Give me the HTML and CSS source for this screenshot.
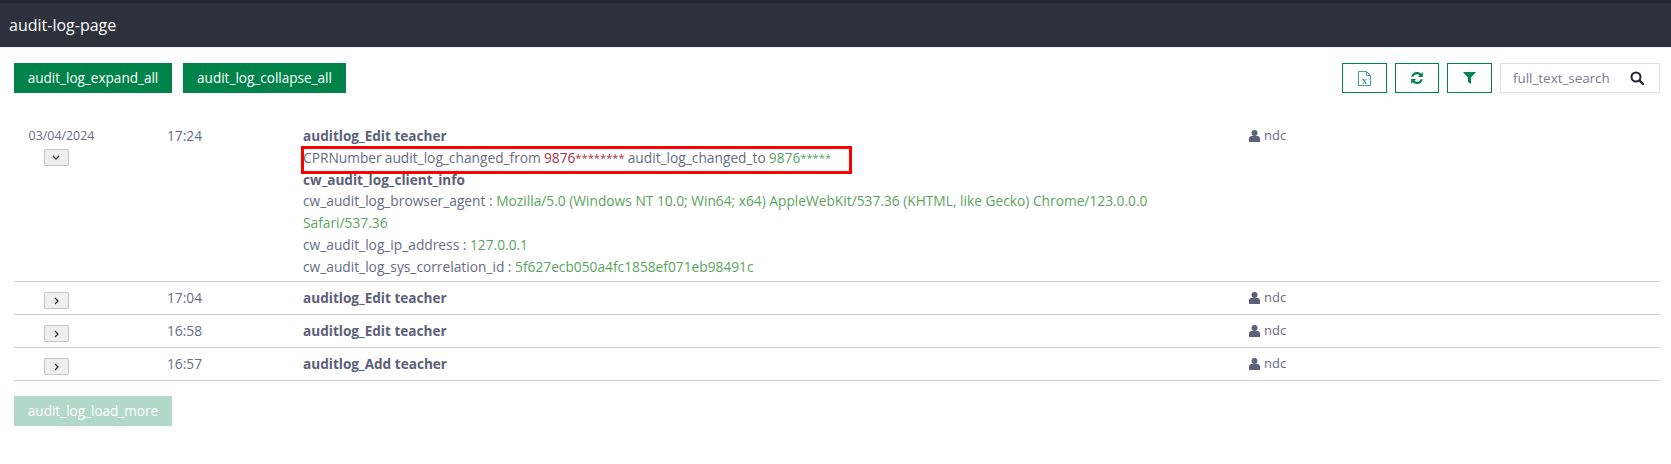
FILE: index.html
```html
<!DOCTYPE html>
<html lang="en">
<head>
<meta charset="utf-8">
<title>audit-log-page</title>
<link rel="stylesheet" href="styles.css">
</head>
<body>
<header class="topbar"><h1 class="page-title">audit-log-page</h1></header>
<main class="content">
  <div class="toolbar">
    <div class="btn-group">
      <button class="btn btn-solid">audit_log_expand_all</button>
      <button class="btn btn-solid btn-wide">audit_log_collapse_all</button>
    </div>
    <div class="tools">
      <button class="btn-icon" aria-label="export">
        <svg width="13" height="15" viewBox="0 0 13 15"><path d="M.5.500h8l4 4v10H.5z" fill="none" stroke="#4a9f95"/><path d="M8.500.500v4h4" fill="none" stroke="#4a9f95"/><text x="6.500" y="12.500" class="xls">x</text></svg>
      </button>
      <button class="btn-icon btn-icon-narrow" aria-label="refresh">
        <svg width="14" height="14" viewBox="0 0 14 14"><path d="M1.200 5.800C1.800 2.900 4.200 1 7 1c1.700 0 3.100.6 4.200 1.700L12.800 1v5H7.900l1.700-1.700C8.900 3.600 8 3.200 7 3.200c-1.700 0-3.100 1-3.600 2.600zM12.800 8.200C12.200 11.100 9.800 13 7 13c-1.700 0-3.100-.6-4.200-1.700L1.200 13V8h4.900l-1.700 1.700c.7.700 1.600 1.100 2.600 1.100 1.700 0 3.100-1 3.600-2.600z" fill="#00834a"/></svg>
      </button>
      <button class="btn-icon" aria-label="filter">
        <svg width="13" height="12" viewBox="0 0 13 12"><path d="M0 0h13L8 5.500V12L5 10V5.500z" fill="#00834a"/></svg>
      </button>
      <label class="search">
        <span class="search-text">full_text_search</span>
        <svg width="14" height="14" viewBox="0 0 14 14"><circle cx="6" cy="6" r="4.500" fill="none" stroke="#1f2533" stroke-width="2"/><path d="M9.500 9.500l3.500 3.500" stroke="#1f2533" stroke-width="2.400" stroke-linecap="round"/></svg>
      </label>
    </div>
  </div>

  <section class="log">
    <article class="row row-open">
      <div class="col-date">
        <span class="date">03/04/2024</span>
        <button class="toggle" aria-label="collapse"><svg width="8" height="5" viewBox="0 0 8 5"><path d="M1 1l3 3 3-3" fill="none" stroke="#333" stroke-width="1.300"/></svg></button>
      </div>
      <div class="col-time">17:24</div>
      <div class="col-main">
        <div class="title">auditlog_Edit teacher</div>
        <div class="line change">CPRNumber audit_log_changed_from <span class="old">9876<span class="mask">********</span></span> audit_log_changed_to <span class="new">9876<span class="mask">*****</span></span><span class="highlight"></span></div>
        <div class="title">cw_audit_log_client_info</div>
        <div class="line">cw_audit_log_browser_agent : <span class="new">Mozilla/5.0 (Windows NT 10.0; Win64; x64) AppleWebKit/537.36 (KHTML, like Gecko) Chrome/123.0.0.0 Safari/537.36</span></div>
        <div class="line">cw_audit_log_ip_address : <span class="new">127.0.0.1</span></div>
        <div class="line">cw_audit_log_sys_correlation_id : <span class="new">5f627ecb050a4fc1858ef071eb98491c</span></div>
      </div>
      <div class="col-user"><svg class="user-icon" width="11" height="12" viewBox="0 0 11 12"><circle cx="5.500" cy="3" r="3" fill="#5c6078"/><path d="M0 12V8.500C0 7 1.200 6 2.500 6h6C9.800 6 11 7 11 8.500V12z" fill="#5c6078"/></svg>ndc</div>
    </article>
    <article class="row">
      <div class="col-date"><button class="toggle" aria-label="expand"><svg width="5" height="8" viewBox="0 0 5 8"><path d="M1 1l3 3-3 3" fill="none" stroke="#333" stroke-width="1.300"/></svg></button></div>
      <div class="col-time">17:04</div>
      <div class="col-main"><div class="title">auditlog_Edit teacher</div></div>
      <div class="col-user"><svg class="user-icon" width="11" height="12" viewBox="0 0 11 12"><circle cx="5.500" cy="3" r="3" fill="#5c6078"/><path d="M0 12V8.500C0 7 1.200 6 2.500 6h6C9.800 6 11 7 11 8.500V12z" fill="#5c6078"/></svg>ndc</div>
    </article>
    <article class="row">
      <div class="col-date"><button class="toggle" aria-label="expand"><svg width="5" height="8" viewBox="0 0 5 8"><path d="M1 1l3 3-3 3" fill="none" stroke="#333" stroke-width="1.300"/></svg></button></div>
      <div class="col-time">16:58</div>
      <div class="col-main"><div class="title">auditlog_Edit teacher</div></div>
      <div class="col-user"><svg class="user-icon" width="11" height="12" viewBox="0 0 11 12"><circle cx="5.500" cy="3" r="3" fill="#5c6078"/><path d="M0 12V8.500C0 7 1.200 6 2.500 6h6C9.800 6 11 7 11 8.500V12z" fill="#5c6078"/></svg>ndc</div>
    </article>
    <article class="row">
      <div class="col-date"><button class="toggle" aria-label="expand"><svg width="5" height="8" viewBox="0 0 5 8"><path d="M1 1l3 3-3 3" fill="none" stroke="#333" stroke-width="1.300"/></svg></button></div>
      <div class="col-time">16:57</div>
      <div class="col-main"><div class="title">auditlog_Add teacher</div></div>
      <div class="col-user"><svg class="user-icon" width="11" height="12" viewBox="0 0 11 12"><circle cx="5.500" cy="3" r="3" fill="#5c6078"/><path d="M0 12V8.500C0 7 1.200 6 2.500 6h6C9.800 6 11 7 11 8.500V12z" fill="#5c6078"/></svg>ndc</div>
    </article>
  </section>
  <button class="btn btn-solid btn-disabled">audit_log_load_more</button>
</main>
</body>
</html>
```
FILE: styles.css
```css
* { box-sizing: border-box; }
html, body { margin: 0; height: 100%; background: #fff; overflow: hidden; }
body { font-family: "Open Sans", "Noto Sans", sans-serif; font-size: 13.750px; color: #686c84; }
.topbar { height: 48px; background: #2d313c; border-top: 3px solid #23262e; border-bottom: 1px solid #e9ecf1; display: flex; align-items: center; padding: 0 9px; }
.page-title { margin: 0; font-size: 16px; font-weight: 400; color: #fff; }
.content { padding: 15px 11px 0 14px; }
.toolbar { display: flex; justify-content: space-between; height: 30px; }
.btn-group, .tools { display: flex; }
.btn-group { gap: 11px; }
.tools { gap: 8px; }
button { font-family: inherit; }
.btn { border: 0; padding: 0; font-size: 13.550px; height: 30px; }
.btn-solid { width: 158px; background: #00834a; color: #fff; }
.btn-wide { width: 163px; }
.btn-disabled { display: block; background: #b2d9c8; margin-top: 15px; }
.btn-icon { width: 45px; height: 30px; background: #fff; border: 1px solid #00834a; padding: 0; display: flex; align-items: center; justify-content: center; }
.btn-icon-narrow { width: 44px; }
.xls { font-family: "Liberation Serif", serif; font-size: 11px; fill: #00834a; text-anchor: middle; }
.search { width: 160px; height: 30px; border: 1px solid #dde1ea; display: flex; align-items: center; justify-content: space-between; padding: 0 15px 0 12px; font-size: 13.400px; }
.search-text { color: #777c8c; }
.log { margin-top: 26px; }
.row { display: flex; border-bottom: 1px solid #cfcfcf; height: 33px; padding-top: 5px; line-height: 21.800px; }
.row-open { height: 163px; padding-top: 6px; }
.col-date { width: 84px; display: flex; flex-direction: column; align-items: center; flex: none; }
.date { font-size: 12.400px; line-height: 20px; padding: 1px 0 0 11px; }
.toggle { width: 25px; height: 17px; background: #efefef; border: 1px solid #c4c4c4; border-radius: 2px; padding: 0; display: flex; align-items: center; justify-content: center; margin-top: 5px; }
.row-open .toggle { margin-top: 3px; }
.col-time { margin-left: 69px; width: 136px; flex: none; }
.col-main { width: 855px; flex: none; }
.title { font-weight: 700; font-size: 13.600px; color: #5c6078; }
.change { position: relative; word-spacing: -0.500px; }
.highlight { position: absolute; left: -2px; top: -1px; width: 551px; height: 28px; border: 3px solid #f00; }
.new { color: #5ba45f; }
.old { color: #a8324a; }
.mask { font-size: 11.200px; line-height: 1; vertical-align: 1px; }
.col-user { margin-left: 91px; display: flex; align-items: flex-start; gap: 4px; font-size: 13px; }
.user-icon { margin-top: 5px; }
```
